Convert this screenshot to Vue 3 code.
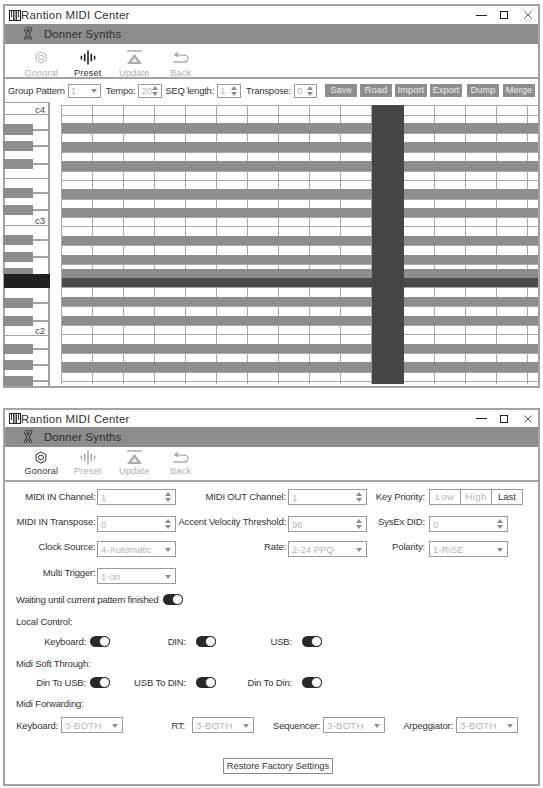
<script setup>
const tabs = ['Gonoral', 'Preset', 'Update', 'Back']

const gridEdges = [107,117,125,135,144,154,163,173,182,191,201,210,219,228,238,247,257,266,271,280,289,299,308,318,327,336,346,355,364,374,383,386]
const greyRows = [125,144,163,191,210,238,257,271,299,318,346,364]
const gridRows = gridEdges.slice(0, -1).map((top, i) => ({
  height: gridEdges[i + 1] - top,
  kind: top === 280 ? 'dark' : greyRows.includes(top) ? 'grey' : 'open'
}))
const columns = Array.from({ length: 16 }, (_, i) => i)

const keys = [
  [11,'w','c4'],[1,'f'],[9,'w'],[11,'b'],[6,'w'],[10,'b'],[8,'w'],[10,'b'],[9,'w'],[1,'f'],[9,'w'],[10,'b'],[7,'w'],[10,'b'],
  [10,'w','c3'],[1,'f'],[9,'w'],[10,'b'],[7,'w'],[10,'b'],[6,'w'],[6,'s'],[14,'d'],[10,'w'],[10,'b'],[8,'w'],[10,'b'],
  [9,'w','c2'],[1,'f'],[8,'w'],[10,'b'],[6,'w'],[10,'b'],[6,'w'],[10,'b']
].map(([height, kind, label]) => ({ height, kind, label }))

const fields = [
  { label: 'MIDI IN Channel:', type: 'spin', value: '1' },
  { label: 'MIDI OUT Channel:', type: 'spin', value: '1' },
  { label: 'Key Priority:', type: 'seg' },
  { label: 'MIDI IN Transpose:', type: 'spin', value: '0' },
  { label: 'Accent Velocity Threshold:', type: 'spin', value: '96' },
  { label: 'SysEx DID:', type: 'spin', value: '0' },
  { label: 'Clock Source:', type: 'select', value: '4-Automatic' },
  { label: 'Rate:', type: 'select', value: '2-24 PPQ' },
  { label: 'Polarity:', type: 'select', value: '1-RISE' },
  { label: 'Multi Trigger:', type: 'select', value: '1-on' }
]
const localControl = ['Keyboard:', 'DIN:', 'USB:']
const softThrough = ['Din To USB:', 'USB To DIN:', 'Din To Din:']
const forwarding = ['Keyboard:', 'RT:', 'Sequencer:', 'Arpeggiator:']
const actions = ['Save', 'Road', 'Import', 'Export', 'Dump', 'Merge']
const windows = [{ id: 'pattern', active: 'Preset' }, { id: 'settings', active: 'Gonoral' }]
</script>

<template>
  <div class="page">
    <section v-for="win in windows" :key="win.id" class="window" :class="win.id">
      <header class="titlebar">
        <svg class="app-icon" viewBox="0 0 12 11" width="12" height="11">
          <rect x="0.5" y="0.5" width="11" height="10" fill="none" stroke="#222" />
          <path d="M2.500 1v6M4.500 1v9M6 1v9M7.500 1v9M9.500 1v6" stroke="#222" stroke-width="0.9" fill="none" />
        </svg>
        <span class="app-name">Rantion MIDI Center</span>
        <div class="win-controls">
          <i class="win-min"></i>
          <i class="win-max"></i>
          <svg viewBox="0 0 8 8" width="8" height="8" class="win-close">
            <path d="M0.500 0.500l7 7M7.500 0.500l-7 7" stroke="#333" stroke-width="0.8" fill="none" />
          </svg>
        </div>
      </header>

      <div class="brand">
        <svg class="brand-logo" viewBox="0 0 10 14" width="10" height="14">
          <g fill="none" stroke-linejoin="round">
            <path d="M2 1.800H8L1.800 12.800M2 1.800L8.200 12.800" stroke="#2c2c2c" stroke-width="2.800" />
            <path d="M2 1.800H8L1.800 12.800M2 1.800L8.200 12.800" stroke="#8e8c8c" stroke-width="1.200" />
          </g>
        </svg>
        <span>Donner Synths</span>
      </div>

      <nav class="toolbar">
        <div v-for="tab in tabs" :key="tab" class="tab" :class="{ on: tab === win.active }">
          <svg v-if="tab === 'Gonoral'" viewBox="0 0 16 16" width="16" height="15">
            <path d="M8 2l5.200 3v6L8 14l-5.200-3V5z" fill="none" stroke="currentColor" stroke-width="1" stroke-linejoin="round" />
            <circle cx="8" cy="8" r="2.600" fill="none" stroke="currentColor" stroke-width="1" />
          </svg>
          <svg v-else-if="tab === 'Preset'" viewBox="0 0 16 16" width="16" height="15">
            <path d="M1 6v4M4.500 4v8M8 0.500v15M11.500 4v8M15 6v4" stroke="currentColor" stroke-width="1.700" fill="none" />
          </svg>
          <svg v-else-if="tab === 'Update'" viewBox="0 0 18 16" width="17" height="15">
            <path d="M1 1h16" stroke="currentColor" stroke-width="1.600" fill="none" />
            <path d="M9 4L1 15h16z M9 8.500L6 12.800h6z" fill="currentColor" fill-rule="evenodd" />
          </svg>
          <svg v-else viewBox="0 0 17 14" width="17" height="14">
            <path d="M6 1L1.500 4.500 6 7V5.200h6.500a2.700 2.700 0 0 1 0 5.600H1.500v1.500h11a4.200 4.200 0 0 0 0-8.400H6z" fill="currentColor" />
          </svg>
          <span>{{ tab }}</span>
        </div>
      </nav>

      <template v-if="win.id === 'pattern'">
        <div class="controls">
          <span class="lbl">Group Pattern</span>
          <div class="box select tiny gp"><span>1</span><i class="caret"></i></div>
          <span class="lbl">Tempo:</span>
          <div class="box spin tiny tp"><span>20</span><i class="arrows"></i></div>
          <span class="lbl">SEQ length:</span>
          <div class="box spin tiny sq"><span>1</span><i class="arrows"></i></div>
          <span class="lbl">Transpose:</span>
          <div class="box spin tiny tr"><span>0</span><i class="arrows"></i></div>
          <button v-for="a in actions" :key="a" class="action" type="button">{{ a }}</button>
        </div>

        <div class="roll">
          <div class="piano">
            <div v-for="(k, i) in keys" :key="i" class="key" :class="'k-' + k.kind" :style="{ height: k.height + 'px' }">
              <span v-if="k.label" class="note">{{ k.label }}</span>
            </div>
          </div>
          <div class="grid">
            <div v-for="(r, i) in gridRows" :key="i" class="row" :class="r.kind" :style="{ height: r.height + 'px' }">
              <div v-for="c in columns" :key="c" class="cell" :class="{ playhead: c === 10 }"></div>
            </div>
          </div>
        </div>
      </template>

      <div v-else class="form">
        <div class="fields">
          <template v-for="f in fields" :key="f.label">
            <label class="field-label">{{ f.label }}</label>
            <div v-if="f.type === 'seg'" class="seg">
              <span class="off">Low</span><span class="off">High</span><span class="cur">Last</span>
            </div>
            <div v-else class="box" :class="f.type">
              <span>{{ f.value }}</span><i :class="f.type === 'spin' ? 'arrows' : 'caret'"></i>
            </div>
          </template>
        </div>

        <div class="inline wait">
          <span>Waiting until current pattern finished</span>
          <i class="toggle"></i>
        </div>

        <div class="heading h-local">Local Control:</div>
        <div class="pairs p-local">
          <div v-for="l in localControl" :key="l" class="pair"><span>{{ l }}</span><i class="toggle"></i></div>
        </div>

        <div class="heading h-soft">Midi Soft Through:</div>
        <div class="pairs p-soft">
          <div v-for="l in softThrough" :key="l" class="pair"><span>{{ l }}</span><i class="toggle"></i></div>
        </div>

        <div class="heading h-fwd">Midi Forwarding:</div>
        <div class="fwd">
          <div v-for="l in forwarding" :key="l" class="fwd-pair">
            <span>{{ l }}</span>
            <div class="box select fwd-box"><span>3-BOTH</span><i class="caret"></i></div>
          </div>
        </div>

        <button class="restore" type="button">Restore Factory Settings</button>
      </div>
    </section>
  </div>
</template>

<style>
html, body { margin: 0; background: #fff; }
</style>

<style scoped>
.page {
  width: 543px;
  height: 788px;
  padding: 4px 3px 0;
  box-sizing: border-box;
  font-family: "Liberation Sans", Arial, sans-serif;
  color: #333;
  font-size: 9.5px;
  letter-spacing: -0.16px;
}
.window {
  width: 537px;
  border: 2px solid #a3a3a3;
  box-sizing: border-box;
  background: #fff;
}
.window.pattern { height: 384px; margin-bottom: 20px; }
.window.settings { height: 378px; }

.titlebar { display: flex; align-items: center; height: 18px; padding-left: 4px; }
.settings .titlebar { height: 17px; }
.app-icon { flex: none; }
.app-name { font-size: 11.4px; letter-spacing: 0.25px; color: #333; }
.win-controls { margin-left: auto; display: flex; align-items: center; padding-right: 6px; }
.win-min { width: 11px; height: 1px; background: #222; margin-right: 13px; }
.win-max { width: 6px; height: 6px; border: 1px solid #222; margin-right: 16px; }
.win-close { display: block; }

.brand {
  height: 20px;
  background: #8e8c8c;
  display: flex;
  align-items: center;
  font-size: 11.3px;
  letter-spacing: 0.2px;
  color: #2e2e2e;
  padding-left: 18px;
}
.brand-logo { margin-right: 11px; }

.toolbar {
  height: 35px;
  box-sizing: border-box;
  border-bottom: 2px solid #a3a3a3;
  display: flex;
  padding-left: 13px;
}
.tab {
  width: 46.500px;
  display: flex;
  flex-direction: column;
  align-items: center;
  color: #adadad;
  padding-top: 6px;
  box-sizing: border-box;
  font-size: 9.2px;
  letter-spacing: 0.15px;
}
.settings .tab { padding-top: 3px; }
.tab.on { color: #222; }
.tab svg { display: block; flex: none; height: 15px; }
.tab span { margin-top: 2px; line-height: 12px; }
.settings .tab span { margin-top: 0; }
.tab.on span { color: #333; }

.controls {
  height: 23px;
  display: flex;
  align-items: center;
  padding-left: 3px;
}
.lbl { margin-right: 3px; white-space: nowrap; font-size: 9.4px; letter-spacing: -0.17px; }

.box {
  width: 79px;
  height: 16px;
  box-sizing: border-box;
  border: 1px solid #9a9a9a;
  display: flex;
  align-items: center;
  justify-content: space-between;
  padding: 0 4px 0 3px;
  color: #b4b4b4;
  font-size: 9.5px;
  letter-spacing: 0;
  background: #fff;
}
.box.tiny { height: 14px; padding: 0 3px 0 2px; flex: none; }
.gp { width: 33px; margin-right: 5px; }
.tp { width: 24px; margin-right: 3px; }
.sq { width: 24px; margin-right: 5px; }
.tr { width: 23px; margin-right: 8px; }

.caret {
  width: 0;
  height: 0;
  border-left: 3px solid transparent;
  border-right: 3px solid transparent;
  border-top: 4px solid #8e8c8c;
  margin-top: 1px;
}
.arrows { display: flex; width: 6px; height: 10px; position: relative; }
.arrows::before, .arrows::after {
  content: "";
  position: absolute;
  left: 0;
  border-left: 3px solid transparent;
  border-right: 3px solid transparent;
}
.arrows::before { top: 0; border-bottom: 4px solid #8e8c8c; }
.arrows::after { bottom: 0; border-top: 4px solid #8e8c8c; }

.action {
  width: 32px;
  height: 13px;
  padding: 0;
  border: 0;
  margin-right: 3px;
  flex: none;
  background: #8e8c8c;
  color: #ececec;
  font: 9.300px "Liberation Sans", Arial, sans-serif;
  line-height: 13px;
}
.action:nth-of-type(4) { margin-right: 5px; }
.action:nth-of-type(5) { margin-right: 4px; }

.roll { display: flex; height: 282px; }
.piano {
  width: 47px;
  height: 284px;
  margin-left: -2px;
  flex: none;
  box-sizing: border-box;
  border-top: 1px solid #a3a3a3;
  overflow: hidden;
}
.key { position: relative; box-sizing: border-box; border-left: 2px solid #a3a3a3; border-right: 2px solid #a3a3a3; }
.k-f { background: #a3a3a3; }
.k-b { border-left: 0; background: linear-gradient(#a3a3a3, #a3a3a3) right 0 center / 15px 2px no-repeat; }
.k-b::before, .k-s::before {
  content: "";
  display: block;
  width: 30px;
  height: 100%;
  background: #8e8c8c;
}
.k-s { border-left: 0; }
.k-d { background: #231f20; border-left: 1px solid #231f20; border-right: 1px solid #231f20; margin-left: 1px; }
.note { position: absolute; right: 3px; bottom: -1px; font-size: 9.500px; letter-spacing: 0; line-height: 11px; color: #444; }

.grid { margin: 3px 0 0 11px; flex: 1; min-width: 0; height: 279px; border-left: 1px solid #a8a8a8; overflow: hidden; }
.row { display: flex; box-sizing: border-box; }
.row.grey { background: #8e8c8c; }
.row.dark { background: #4c4a4a; }
.cell { width: 31.050px; flex: none; box-sizing: border-box; border-right: 1px solid #a8a8a8; }
.row.open .cell { border-top: 1px solid #a8a8a8; }
.row.grey .cell, .row.dark .cell { border-right: 0; }
.row .cell.playhead { background: #474546; border: 0; }

.form { padding-top: 7px; }
.fields {
  display: grid;
  grid-template-columns: 92px 79px 112px 79px 62px 94px;
  grid-template-rows: 27px 25px 27px 16px;
}
.field-label {
  height: 16px;
  line-height: 15px;
  white-space: nowrap;
  padding-right: 1.500px;
  display: flex;
  justify-content: flex-end;
}
.field-label:nth-child(6n+3) { padding-right: 2px; }
.field-label:nth-child(6n+5) { padding-right: 4px; }
.field-label:nth-child(n+7) { margin-top: -2px; }
.field-label:nth-child(19) { margin-top: -3px; }
.seg {
  display: flex;
  height: 16px;
  box-sizing: border-box;
  border: 1px solid #9a9a9a;
}
.seg span { flex: 1; text-align: center; line-height: 14px; font-size: 9.500px; border-left: 1px solid #9a9a9a; }
.seg span:first-child { border-left: 0; }
.seg .off { color: #b4b4b4; letter-spacing: 0.5px; }
.seg .cur { color: #333; letter-spacing: 0; }

.inline { display: flex; align-items: center; padding-left: 11px; height: 12px; letter-spacing: -0.23px; }
.inline .toggle { margin-left: 5px; }
.wait { margin-top: 9px; }
.toggle {
  display: block;
  flex: none;
  width: 20px;
  height: 11px;
  box-sizing: border-box;
  border-radius: 6px;
  background: #2a2728;
  position: relative;
}
.toggle::after {
  content: "";
  position: absolute;
  right: 0;
  top: 0;
  width: 11px;
  height: 11px;
  box-sizing: border-box;
  border-radius: 50%;
  border: 1px solid #2a2728;
  background: #fff;
}
.heading { padding-left: 11px; height: 12px; line-height: 12px; }
.h-local { margin-top: 11px; }
.p-local { margin-top: 7px; }
.h-soft { margin-top: 11px; }
.p-soft { margin-top: 6px; }
.h-fwd { margin-top: 10px; }
.pairs { display: flex; height: 12px; }
.pair { width: 106px; display: flex; align-items: center; justify-content: flex-end; gap: 10px; white-space: nowrap; }
.pair:first-child { width: 105px; gap: 4px; }

.fwd { display: flex; margin-top: 7px; }
.fwd-pair { width: 131px; display: flex; align-items: center; justify-content: flex-end; gap: 3px; white-space: nowrap; }
.fwd-pair:first-child { width: 118px; }
.fwd-pair:nth-child(2) { gap: 7px; }
.fwd-pair:last-child { width: 133px; }
.fwd-box { width: 62px; letter-spacing: 0.3px; }

.restore {
  display: block;
  width: 110px;
  height: 16px;
  margin: 25px 0 0 218px;
  padding: 0;
  background: #fff;
  border: 1px solid #8e8c8c;
  color: #333;
  font: 9.300px "Liberation Sans", Arial, sans-serif;
}
</style>
